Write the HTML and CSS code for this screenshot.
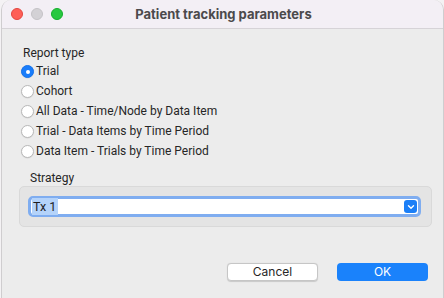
FILE: index.html
```html
<!DOCTYPE html>
<html>
<head>
<meta charset="utf-8">
<link rel="stylesheet" href="styles.css">
</head>
<body>
<div class="window">
  <div class="titlebar">
    <div class="lights">
      <span class="light red"></span>
      <span class="light gray"></span>
      <span class="light green"></span>
    </div>
    <div class="title">Patient tracking parameters</div>
  </div>
  <div class="content">
    <div class="section-label">Report type</div>
    <div class="radios">
      <div class="radio-row"><span class="radio checked"></span><span class="radio-text">Trial</span></div>
      <div class="radio-row"><span class="radio"></span><span class="radio-text">Cohort</span></div>
      <div class="radio-row"><span class="radio"></span><span class="radio-text">All Data - Time/Node by Data Item</span></div>
      <div class="radio-row"><span class="radio"></span><span class="radio-text">Trial - Data Items by Time Period</span></div>
      <div class="radio-row"><span class="radio"></span><span class="radio-text">Data Item - Trials by Time Period</span></div>
    </div>
    <div class="group-label">Strategy</div>
    <div class="group">
      <div class="select">
        <span class="select-text"><span class="sel">Tx 1</span></span>
        <span class="select-btn">
          <svg width="8" height="6" viewBox="0 0 8 6"><path d="M1.5 1.8 L4 4.2 L6.5 1.8" fill="none" stroke="#fff" stroke-width="1.4" stroke-linecap="round" stroke-linejoin="round"/></svg>
        </span>
      </div>
    </div>
    <div class="buttons">
      <button class="btn cancel">Cancel</button>
      <button class="btn ok">OK</button>
    </div>
  </div>
</div>
</body>
</html>
```
FILE: styles.css
```css
html, body {
  margin: 0;
  padding: 0;
  background: #f4f2f4;
  width: 444px;
  height: 298px;
  overflow: hidden;
}
body {
  font-family: "Inter", "Liberation Sans", sans-serif;
}
.window {
  margin-left: 1px;
  width: 441px;
  height: 306px;
  background: #ececec;
  border: 1px solid #cfcdcf;
  border-top: none;
  border-radius: 10px;
  overflow: hidden;
  display: flex;
  flex-direction: column;
}
.titlebar {
  height: 28px;
  background: #f3eff5;
  border-bottom: 1px solid #d6d3d7;
  display: flex;
  align-items: center;
  position: relative;
}
.lights {
  display: flex;
  gap: 8px;
  padding-left: 9px;
}
.light {
  width: 12px;
  height: 12px;
  border-radius: 50%;
  display: block;
}
.red { background: #fe5f57; border: 0.5px solid #e2463f; box-sizing: border-box; }
.gray { background: #d3d1d5; border: 0.5px solid #c4c2c6; box-sizing: border-box; }
.green { background: #28c840; border: 0.5px solid #14ae2b; box-sizing: border-box; }
.title {
  position: absolute;
  left: 0;
  right: 0;
  text-align: center;
  font-weight: 700;
  font-size: 13px;
  color: #4b4a4c;
  padding-left: 2px;
}
.content {
  padding: 16px 0 0 19px;
  font-family: "Roboto", "Liberation Sans", sans-serif;
  font-size: 12px;
  color: #262626;
}
.section-label {
  height: 16px;
  line-height: 16px;
  padding-left: 2px;
}
.radios {
  margin-top: 2px;
  display: flex;
  flex-direction: column;
  gap: 4px;
}
.radio-row {
  display: flex;
  align-items: center;
  height: 16px;
}
.radio {
  width: 13px;
  height: 13px;
  box-sizing: border-box;
  border-radius: 50%;
  background: #fff;
  border: 0.5px solid #b9b9b9;
  box-shadow: 0 0.5px 1px rgba(0,0,0,0.1);
  margin-right: 2px;
  position: relative;
}
.radio.checked {
  background: #1a7dfa;
  border-color: #1473ec;
}
.radio.checked::after {
  content: "";
  position: absolute;
  left: 4px;
  top: 4px;
  width: 4px;
  height: 4px;
  border-radius: 50%;
  background: #fff;
}
.group-label {
  margin-top: 11px;
  padding-left: 9px;
  height: 16px;
  line-height: 16px;
}
.group {
  margin-top: 0;
  margin-left: -2px;
  width: 413px;
  height: 41px;
  box-sizing: border-box;
  background: #e4e4e4;
  border: 1px solid #d9d9d9;
  border-radius: 5px;
  padding: 9px 0 0 8px;
}
.select {
  width: 393px;
  height: 21px;
  box-sizing: border-box;
  border: 3px solid #7fadf0;
  border-radius: 5px;
  background: #fff;
  display: flex;
  align-items: center;
  justify-content: space-between;
}
.select-text {
  padding-left: 1px;
  font-size: 12.5px;
  color: #1e1e1e;
}
.sel {
  background: #b4d3fa;
  padding: 1px 2px 1px 1px;
}
.select-btn {
  width: 13px;
  height: 13px;
  background: #1b7ff7;
  border-radius: 3px;
  margin-right: 1px;
  display: flex;
  align-items: center;
  justify-content: center;
}
.buttons {
  margin-top: 36px;
  display: flex;
  gap: 19px;
  padding-left: 206px;
}
.btn {
  width: 91px;
  height: 18px;
  border-radius: 4px;
  font-family: "Inter", "Liberation Sans", sans-serif;
  font-size: 12px;
  padding: 0;
  line-height: 16px;
}
.cancel {
  background: #fff;
  border: 0.5px solid #c6c6c6;
  color: #262626;
  box-shadow: 0 0.5px 1px rgba(0,0,0,0.15);
}
.ok {
  background: #1a82fb;
  border: none;
  color: #fff;
}
```
